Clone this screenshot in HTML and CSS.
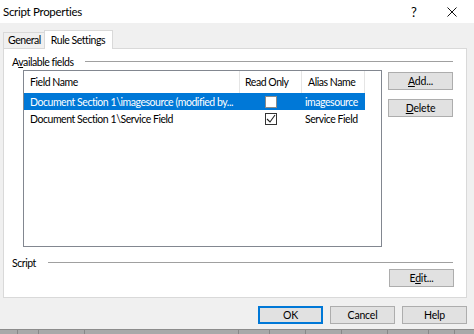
FILE: index.html
```html
<!DOCTYPE html>
<html lang="en">
<head>
    <meta charset="UTF-8">
    <title>Script Properties</title>
    <link rel="stylesheet" href="styles.css">
</head>
<body>
    <div class="titlebar">
        <span class="title">Script Properties</span>
        <span class="help-btn">?</span>
        <span class="close-btn">
            <svg width="10" height="10" viewBox="0 0 10 10"><path d="M0.5 0.5L9.5 9.5M9.5 0.5L0.5 9.5" stroke="#111" stroke-width="1"/></svg>
        </span>
    </div>
    <div class="dialog">
        <div class="tabs">
            <div class="tab">General</div>
            <div class="tab active">Rule Settings</div>
        </div>
        <div class="panel">
            <div class="group-head">
                <span class="group-label">A<u>v</u>ailable fields</span>
                <span class="group-line"></span>
            </div>
            <div class="fields">
                <div class="listview">
                    <div class="lv-row lv-header">
                        <div class="col col-name">Field Name</div>
                        <div class="col col-ro">Read Only</div>
                        <div class="col col-alias">Alias Name</div>
                    </div>
                    <div class="lv-row lv-item selected">
                        <div class="col col-name">Document Section 1\imagesource (modified by...</div>
                        <div class="col col-ro"><span class="check"></span></div>
                        <div class="col col-alias">imagesource</div>
                    </div>
                    <div class="lv-row lv-item">
                        <div class="col col-name">Document Section 1\Service Field</div>
                        <div class="col col-ro">
                            <span class="check checked">
                                <svg width="10" height="10" viewBox="0 0 10 10"><path d="M1 5L4 8L9 1" fill="none" stroke="#222" stroke-width="1.1"/></svg>
                            </span>
                        </div>
                        <div class="col col-alias">Service Field</div>
                    </div>
                </div>
                <div class="side-buttons">
                    <button type="button" class="btn"><u>A</u>dd...</button>
                    <button type="button" class="btn"><u>D</u>elete</button>
                </div>
            </div>
            <div class="group-head script-head">
                <span class="group-label">Script</span>
                <span class="group-line"></span>
            </div>
            <div class="edit-row">
                <button type="button" class="btn">E<u>d</u>it...</button>
            </div>
        </div>
        <div class="footer">
            <button type="button" class="btn default">OK</button>
            <button type="button" class="btn">Cancel</button>
            <button type="button" class="btn">Help</button>
        </div>
    </div>
    <div class="taskbar">
        <span class="seg" style="width:17px"></span>
        <span class="seg" style="width:20px"></span>
        <span class="seg" style="width:45px"></span>
        <span class="seg" style="width:153px"></span>
        <span class="seg" style="width:30px"></span>
        <span class="seg" style="width:35px"></span>
        <span class="seg" style="width:35px"></span>
        <span class="seg" style="width:45px"></span>
        <span class="seg" style="width:40px"></span>
        <span class="seg" style="width:25px"></span>
    </div>
</body>
</html>
```

FILE: styles.css
```css
html, body {
    margin: 0;
    width: 474px;
    height: 334px;
    overflow: hidden;
}
body {
    font-family: 'Lato', 'Noto Sans', sans-serif;
    font-size: 10.5px;
    letter-spacing: -0.45px;
    color: #000;
    background: #f0f0f0;
    display: flex;
    flex-direction: column;
}
u {
    text-decoration-thickness: 1px;
    text-underline-offset: 1px;
}
.titlebar {
    height: 23px;
    flex-shrink: 0;
    background: #fff;
    display: flex;
    align-items: center;
    padding-left: 3px;
    font-size: 11.5px;
    letter-spacing: -0.3px;
}
.title {
    flex: 1;
}
.help-btn {
    width: 20px;
    margin-right: 16px;
    font-size: 13px;
}
.close-btn {
    width: 10px;
    margin-right: 17px;
    display: flex;
}
.dialog {
    flex: 1;
    padding: 7px 7px 0 3px;
    display: flex;
    flex-direction: column;
}
.tabs {
    display: flex;
    align-items: flex-end;
    height: 18px;
    white-space: nowrap;
}
.tab {
    height: 16px;
    line-height: 15px;
    padding: 0 3px 0 4px;
    border: 1px solid #d9d9d9;
    border-bottom: none;
    border-right: none;
    box-sizing: border-box;
    background: #f0f0f0;
}
.tab.active {
    height: 19px;
    line-height: 18px;
    border-right: 1px solid #d9d9d9;
    background: #fff;
    margin-bottom: -1px;
    padding: 0 7px 0 6px;
    position: relative;
}
.panel {
    height: 250px;
    flex-shrink: 0;
    box-sizing: border-box;
    background: #fff;
    border: 1px solid #d9d9d9;
    padding: 6px 13px 0 8px;
    display: flex;
    flex-direction: column;
}
.group-head {
    display: flex;
    align-items: center;
    height: 14px;
    white-space: nowrap;
}
.group-label {
    margin-right: 12px;
}
.group-line {
    flex: 1;
    height: 1px;
    background: #a0a0a0;
    border-bottom: 1px solid #fff;
}
.fields {
    display: flex;
    margin-top: 1px;
}
.listview {
    margin-left: 11px;
    width: 360px;
    height: 177px;
    box-sizing: border-box;
    border: 1px solid #828790;
    overflow: hidden;
}
.lv-row {
    display: flex;
    height: 17px;
    align-items: center;
    white-space: nowrap;
}
.lv-header {
    height: 22px;
}
.lv-header .col {
    height: 22px;
    line-height: 22px;
    border-right: 1px solid #e5e5e5;
    padding-left: 6px;
}
.col {
    box-sizing: border-box;
    overflow: hidden;
}
.col-name {
    width: 216px;
    padding-left: 6px;
}
.col-ro {
    width: 62px;
    display: flex;
    justify-content: center;
}
.lv-header .col-ro {
    display: block;
    padding-left: 5px;
}
.col-alias {
    width: 63px;
    padding-left: 3px;
}
.lv-item.selected {
    background: #0078d7;
    color: #fff;
    width: 341px;
}
.check {
    width: 12px;
    height: 12px;
    box-sizing: border-box;
    border: 1px solid #333;
    background: #fff;
    display: flex;
    align-items: center;
    justify-content: center;
}
.selected .check {
    border-color: #8a8a8a;
}
.side-buttons {
    margin-left: 6px;
    display: flex;
    flex-direction: column;
    gap: 9px;
    padding-top: 2px;
}
.btn {
    width: 65px;
    height: 18px;
    box-sizing: border-box;
    background: #e1e1e1;
    border: 1px solid #adadad;
    font-family: inherit;
    font-size: 10.5px;
    letter-spacing: -0.2px;
    color: #000;
    padding: 0;
    line-height: 15px;
}
.script-head {
    margin-top: 9px;
    height: 13px;
}
.edit-row {
    display: flex;
    justify-content: flex-end;
    margin-right: -1px;
}
.footer {
    display: flex;
    justify-content: flex-end;
    gap: 7px;
    margin-top: 8px;
}
.btn.default {
    border-color: #0078d7;
    box-shadow: inset 0 0 0 1px #0078d7;
}
.taskbar {
    height: 4px;
    flex-shrink: 0;
    background: #a9a9a9;
    border-top: 1px solid #8c8c8c;
    display: flex;
}
.seg {
    border-right: 1px solid #888;
}
```
